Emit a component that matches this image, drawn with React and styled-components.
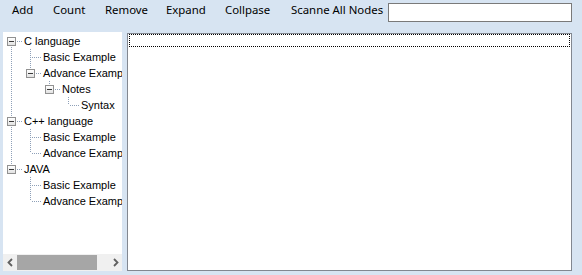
import React from "react";
import styled, { createGlobalStyle } from "styled-components";

const GlobalStyle = createGlobalStyle`
  html, body {
    margin: 0;
    padding: 0;
    background: #d7e4f2;
    width: 582px;
    height: 275px;
    overflow: hidden;
  }
`;

const Window = styled.div`
  width: 582px;
  height: 275px;
  background: #d7e4f2;
  display: flex;
  flex-direction: column;
`;

const Toolbar = styled.div`
  height: 25px;
  display: flex;
  align-items: flex-start;
  padding: 0 0 0 12px;
  box-sizing: border-box;
  font-family: "Noto Sans", "Open Sans", sans-serif;
  font-size: 11.4px;
  color: #000;
`;

const ToolButton = styled.div`
  width: ${(p) => p.$w}px;
  height: 21px;
  line-height: 20px;
  white-space: nowrap;
`;

const SearchBox = styled.input`
  width: 184px;
  height: 19px;
  margin-top: 3px;
  box-sizing: border-box;
  border: 1px solid #7a7a7a;
  background: #fff;
  outline: none;
  padding: 0 3px;
  font: 12px "Noto Sans", sans-serif;
`;

const Main = styled.div`
  display: flex;
  align-items: flex-start;
  gap: 5px;
  padding: 7px 0 0 3px;
`;

const Tree = styled.div`
  width: 119px;
  height: 239px;
  background: #fff;
  display: flex;
  flex-direction: column;
  overflow: hidden;
`;

const Nodes = styled.div`
  flex: 1;
  padding: 1px 0 0 1px;
  font-family: "Liberation Sans", Arial, sans-serif;
  font-size: 11px;
  color: #000;
  overflow: hidden;
`;

const Row = styled.div`
  display: flex;
  height: 16px;
  align-items: center;
  white-space: nowrap;
`;

const dots = (dir) =>
  `repeating-linear-gradient(${dir}, #8ea0b8 0 1px, transparent 1px 2px)`;

const Cell = styled.div`
  position: relative;
  flex: 0 0 19px;
  height: 16px;

  &::before {
    content: "";
    position: absolute;
    left: 7px;
    width: 1px;
    background: ${dots("180deg")};
    display: ${(p) => (p.$kind === "blank" ? "none" : "block")};
    top: ${(p) => (p.$kind === "first" ? "8px" : "0")};
    bottom: ${(p) => (p.$kind === "elbow" ? "8px" : "0")};
  }
  &::after {
    content: "";
    position: absolute;
    left: 9px;
    top: 8px;
    width: 9px;
    height: 1px;
    background: ${dots("90deg")};
    display: ${(p) => (p.$kind === "pipe" || p.$kind === "blank" ? "none" : "block")};
  }
`;

const Expander = styled.span`
  position: absolute;
  left: 3px;
  top: 4px;
  width: 9px;
  height: 9px;
  box-sizing: border-box;
  border: 1px solid #919191;
  background: linear-gradient(#ffffff, #e2e2e2);
  z-index: 1;

  &::after {
    content: "";
    position: absolute;
    left: 1px;
    top: 3px;
    width: 5px;
    height: 1px;
    background: #3a3a3a;
  }
`;

const Label = styled.span`
  padding-left: 1px;
`;

const HScroll = styled.div`
  flex: 0 0 17px;
  background: #f0f0f0;
  display: flex;
  align-items: center;
`;

const Arrow = styled.div`
  flex: 0 0 14px;
  height: 17px;
  display: flex;
  align-items: center;
  justify-content: center;
`;

const Thumb = styled.div`
  width: 80px;
  height: 15px;
  background: #a6a6a6;
`;

const ScrollTrack = styled.div`
  flex: 1;
  display: flex;
  align-items: center;
`;

const ListBox = styled.div`
  margin-top: 1px;
  width: 445px;
  height: 238px;
  box-sizing: border-box;
  border: 1px solid #828790;
  background: #fff;
  padding: 0 1px;
`;

const focusH = "repeating-linear-gradient(90deg, #000 0 1px, transparent 1px 2px)";
const focusV = "repeating-linear-gradient(180deg, #000 0 1px, transparent 1px 2px)";

const FocusRow = styled.div`
  height: 13px;
  background:
    ${focusH} top left / 100% 1px no-repeat,
    ${focusH} bottom left / 100% 1px no-repeat,
    ${focusV} top left / 1px 100% no-repeat,
    ${focusV} top right / 1px 100% no-repeat;
`;

const Chevron = ({ dir }) => (
  <svg width="7" height="9" viewBox="0 0 7 9">
    <path
      d={dir === "left" ? "M5 1 L1.5 4.5 L5 8" : "M2 1 L5.5 4.5 L2 8"}
      fill="none"
      stroke="#606060"
      strokeWidth="1.8"
    />
  </svg>
);

const rows = [
  { cells: ["first"], box: true, text: "C language" },
  { cells: ["pipe", "tee"], text: "Basic Example" },
  { cells: ["pipe", "elbow"], box: true, text: "Advance Example" },
  { cells: ["pipe", "blank", "elbow"], box: true, text: "Notes" },
  { cells: ["pipe", "blank", "blank", "elbow"], text: "Syntax" },
  { cells: ["tee"], box: true, text: "C++ language" },
  { cells: ["pipe", "tee"], text: "Basic Example" },
  { cells: ["pipe", "elbow"], text: "Advance Example" },
  { cells: ["elbow"], box: true, text: "JAVA" },
  { cells: ["blank", "tee"], text: "Basic Example" },
  { cells: ["blank", "elbow"], text: "Advance Example" },
];

const buttons = [
  { label: "Add", w: 41 },
  { label: "Count", w: 52 },
  { label: "Remove", w: 61 },
  { label: "Expand", w: 59 },
  { label: "Collpase", w: 66 },
  { label: "Scanne All Nodes", w: 97 },
];

export default function App() {
  return (
    <Window>
      <GlobalStyle />
      <Toolbar>
        {buttons.map((b) => (
          <ToolButton key={b.label} $w={b.w}>
            {b.label}
          </ToolButton>
        ))}
        <SearchBox />
      </Toolbar>
      <Main>
        <Tree>
          <Nodes>
            {rows.map((r, i) => (
              <Row key={i}>
                {r.cells.map((c, j) => (
                  <Cell key={j} $kind={c}>
                    {r.box && j === r.cells.length - 1 && <Expander />}
                  </Cell>
                ))}
                <Label>{r.text}</Label>
              </Row>
            ))}
          </Nodes>
          <HScroll>
            <Arrow>
              <Chevron dir="left" />
            </Arrow>
            <ScrollTrack>
              <Thumb />
            </ScrollTrack>
            <Arrow>
              <Chevron dir="right" />
            </Arrow>
          </HScroll>
        </Tree>
        <ListBox>
          <FocusRow />
        </ListBox>
      </Main>
    </Window>
  );
}
